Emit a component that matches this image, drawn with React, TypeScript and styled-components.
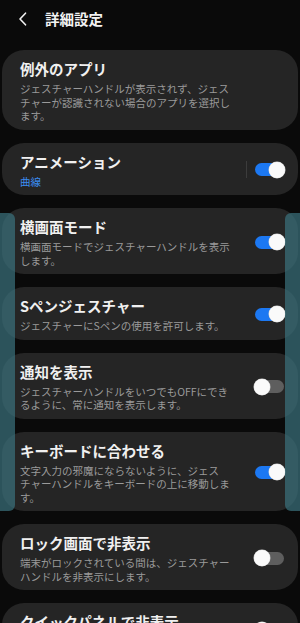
import React from "react";
import styled, { createGlobalStyle } from "styled-components";

const Global = createGlobalStyle`
  html, body { margin: 0; padding: 0; background: #0a0a0a; }
  body { font-family: "Noto Sans CJK JP", "Noto Sans", sans-serif; -webkit-font-smoothing: antialiased; }
  #root { width: 300px; height: 623px; overflow: hidden; }
`;

const Screen = styled.div`
  width: 300px;
  height: 623px;
  background: #0a0a0a;
  display: flex;
  flex-direction: column;
  overflow: hidden;
`;

const Header = styled.header`
  flex: none;
  height: 37px;
  display: flex;
  align-items: center;
  padding-left: 15px;
  gap: 16px;
`;

const BackButton = styled.span`
  width: 14px;
  height: 16px;
  display: flex;
  align-items: center;
  justify-content: center;
`;

const Title = styled.h1`
  margin: 0;
  font-size: 14.5px;
  font-weight: 700;
  color: #f2f2f2;
  line-height: 20px;
`;

const List = styled.div`
  flex: none;
  display: flex;
  flex-direction: column;
  gap: 13px;
  padding: 13px 2px 0;
`;

const Group = styled.div`
  position: relative;
  display: flex;
  flex-direction: column;
  gap: 13px;
`;

const EdgeStrip = styled.div<{ $side: "left" | "right" }>`
  position: absolute;
  top: 5px;
  bottom: 0;
  width: 15px;
  ${(p) => (p.$side === "left" ? "left: -2px; border-radius: 0 6px 6px 0;" : "right: -2px; border-radius: 6px 0 0 6px;")}
  background: rgba(58, 112, 124, 0.72);
  pointer-events: none;
`;

const Card = styled.div`
  flex: none;
  background: #252525;
  border-radius: 22px;
  padding: 9px 14px 7px 18px;
  display: flex;
  align-items: center;
  gap: 8px;
`;

const TextCol = styled.div`
  flex: 1;
  display: flex;
  flex-direction: column;
  min-width: 0;
`;

const ItemTitle = styled.div`
  font-size: 14.5px;
  line-height: 20px;
  font-weight: 700;
  color: #f0f0f0;
  white-space: nowrap;
`;

const Desc = styled.div<{ $accent?: boolean }>`
  margin-top: 3px;
  font-size: 10.5px;
  line-height: 13.5px;
  color: ${(p) => (p.$accent ? "#3b8df2" : "#9a9a9a")};
  white-space: nowrap;
`;

const Divider = styled.span`
  width: 1px;
  height: 17px;
  background: #3c3c3c;
`;

const Track = styled.span<{ $on: boolean }>`
  position: relative;
  width: 29px;
  height: 13px;
  border-radius: 7px;
  background: ${(p) => (p.$on ? "#1c78f2" : "#5e5e5e")};
  flex: none;
`;

const Thumb = styled.span<{ $on: boolean }>`
  position: absolute;
  top: -1.5px;
  ${(p) => (p.$on ? "right: -1px;" : "left: -1px;")}
  width: 16px;
  height: 16px;
  border-radius: 50%;
  background: #fafafa;
  box-shadow: 0 0 0 0.5px #cfcfcf;
`;

function Toggle({ on }: { on: boolean }) {
  return (
    <Track $on={on}>
      <Thumb $on={on} />
    </Track>
  );
}

type Item = {
  title: string;
  lines?: string[];
  accent?: string;
  toggle?: boolean;
  divider?: boolean;
};

function Row({ item }: { item: Item }) {
  return (
    <Card>
      <TextCol>
        <ItemTitle>{item.title}</ItemTitle>
        {item.lines && (
          <Desc>
            {item.lines.map((l, i) => (
              <React.Fragment key={i}>
                {i > 0 && <br />}
                {l}
              </React.Fragment>
            ))}
          </Desc>
        )}
        {item.accent && <Desc $accent>{item.accent}</Desc>}
      </TextCol>
      {item.divider && <Divider />}
      {item.toggle !== undefined && <Toggle on={item.toggle} />}
    </Card>
  );
}

const top: Item[] = [
  {
    title: "例外のアプリ",
    lines: [
      "ジェスチャーハンドルが表示されず、ジェス",
      "チャーが認識されない場合のアプリを選択し",
      "ます。",
    ],
  },
  { title: "アニメーション", accent: "曲線", toggle: true, divider: true },
];

const middle: Item[] = [
  {
    title: "横画面モード",
    lines: ["横画面モードでジェスチャーハンドルを表示", "します。"],
    toggle: true,
  },
  {
    title: "Sペンジェスチャー",
    lines: ["ジェスチャーにSペンの使用を許可します。"],
    toggle: true,
  },
  {
    title: "通知を表示",
    lines: ["ジェスチャーハンドルをいつでもOFFにでき", "るように、常に通知を表示します。"],
    toggle: false,
  },
  {
    title: "キーボードに合わせる",
    lines: [
      "文字入力の邪魔にならないように、ジェス",
      "チャーハンドルをキーボードの上に移動しま",
      "す。",
    ],
    toggle: true,
  },
];

const bottom: Item[] = [
  {
    title: "ロック画面で非表示",
    lines: ["端末がロックされている間は、ジェスチャー", "ハンドルを非表示にします。"],
    toggle: false,
  },
  { title: "クイックパネルで非表示", lines: ["クイックパネルを開いている間は、ジェス"], toggle: false },
];

export default function App() {
  return (
    <>
      <Global />
      <Screen>
        <Header>
          <BackButton>
            <svg width="9" height="14" viewBox="0 0 9 14" fill="none">
              <path d="M7.5 1.2 L2 7 L7.5 12.8" stroke="#f2f2f2" strokeWidth="1.6" strokeLinecap="round" strokeLinejoin="round" />
            </svg>
          </BackButton>
          <Title>詳細設定</Title>
        </Header>
        <List>
          {top.map((it) => (
            <Row key={it.title} item={it} />
          ))}
          <Group>
            {middle.map((it) => (
              <Row key={it.title} item={it} />
            ))}
            <EdgeStrip $side="left" />
            <EdgeStrip $side="right" />
          </Group>
          {bottom.map((it) => (
            <Row key={it.title} item={it} />
          ))}
        </List>
      </Screen>
    </>
  );
}
